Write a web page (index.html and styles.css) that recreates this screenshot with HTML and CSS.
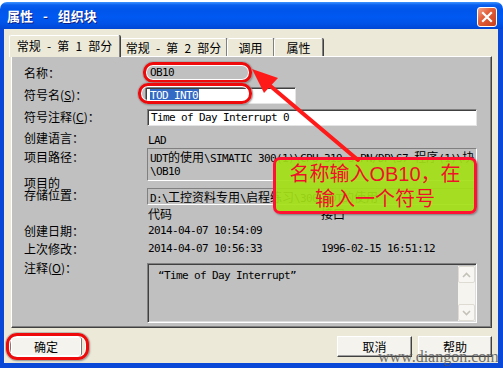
FILE: index.html
```html
<!DOCTYPE html>
<html lang="zh-CN">
<head>
<meta charset="utf-8">
<title>属性 - 组织块</title>
<link rel="stylesheet" href="styles.css">
</head>
<body>
<div class="window">
  <div class="titlebar">
    <span class="title">属性 - 组织块</span>
    <span class="close"><svg width="12" height="12" viewBox="0 0 12 12"><path d="M2 2L10 10M10 2L2 10" stroke="#fff" stroke-width="2.2" stroke-linecap="square"/></svg></span>
  </div>
  <div class="frame">
    <div class="tabs">
      <div class="tab active w1">常规 - 第 1 部分</div>
      <div class="tab w2">常规 - 第 2 部分</div>
      <div class="tab w3">调用</div>
      <div class="tab w4">属性</div>
    </div>
    <div class="panel">
      <div class="form">
        <div class="lbl">名称：</div>
        <div class="val"><div class="plain m">OB10</div></div>

        <div class="lbl">符号名(<u>S</u>)：</div>
        <div class="val"><div class="input short m"><span class="sel">TOD_INT0</span></div></div>

        <div class="lbl">符号注释(<u>C</u>)：</div>
        <div class="val"><div class="input m">Time of Day Interrupt 0</div></div>

        <div class="lbl">创建语言：</div>
        <div class="val"><span class="m txt">LAD</span></div>

        <div class="lbl top">项目路径：</div>
        <div class="val"><div class="box path m">UDT<span class="c">的使用</span>\SIMATIC 300(1)\CPU 319-3 PN/DP\S7 <span class="c">程序</span>(1)\<span class="c">块</span><br>\OB10</div></div>

        <div class="lbl two">项目的<br>存储位置：</div>
        <div class="val end"><div class="box store m">D:\<span class="c">工控资料专用</span>\<span class="c">启程练习</span>\300\UDT<span class="c">的使用</span></div></div>

        <div class="lbl"></div>
        <div class="val pair"><span class="col1">代码</span><span>接口</span></div>

        <div class="lbl">创建日期：</div>
        <div class="val pair m"><span class="col1">2014-04-07 10:54:09</span></div>

        <div class="lbl">上次修改：</div>
        <div class="val pair m"><span class="col1">2014-04-07 10:56:33</span><span>1996-02-15 16:51:12</span></div>

        <div class="lbl top2">注释(<u>O</u>)：</div>
        <div class="val start">
          <div class="comment">
            <div class="ctext m">“Time of Day Interrupt”</div>
            <div class="scroll">
              <div class="sbtn"><svg width="9" height="6" viewBox="0 0 9 6"><path d="M1 5L4.5 1.5L8 5" fill="none" stroke="#c4c2b8" stroke-width="1.6"/></svg></div>
              <div class="sbtn"><svg width="9" height="6" viewBox="0 0 9 6"><path d="M1 1L4.5 4.5L8 1" fill="none" stroke="#c4c2b8" stroke-width="1.6"/></svg></div>
            </div>
          </div>
        </div>
      </div>
    </div>
    <div class="buttons">
      <div class="btn ok">确定</div>
      <div class="spacer"></div>
      <div class="btn cancel">取消</div>
      <div class="btn help">帮助</div>
    </div>
  </div>
</div>

<div class="ring ring1"></div>
<div class="ring ring2"></div>
<div class="ring ring3"></div>

<div class="callout">名称输入<span class="lat">OB10</span>，在<br>输入一个符号</div>

<svg class="arrow" width="503" height="368" viewBox="0 0 503 368">
  <line x1="358" y1="160" x2="268" y2="84" stroke="#ff1a1a" stroke-width="4" stroke-linecap="round"/>
  <polygon points="252,69 264,93 278,78" fill="#ff1a1a"/>
</svg>

<div class="watermark">www.diangon.com</div>
</body>
</html>
```

FILE: styles.css
```css
* { box-sizing: border-box; }
html, body { margin: 0; padding: 0; }
body {
  width: 503px;
  height: 368px;
  overflow: hidden;
  position: relative;
  background: #fff;
  font-family: "Noto Sans CJK SC", sans-serif;
  font-size: 12px;
  color: #000;
}
.window {
  margin-top: 2px;
  height: 366px;
  display: flex;
  flex-direction: column;
}
.titlebar {
  height: 27px;
  flex: none;
  display: flex;
  align-items: center;
  justify-content: space-between;
  padding: 0 6px 0 7px;
  border-radius: 7px 7px 0 0;
  background: linear-gradient(#3d95ff 0, #0a5eef 3px, #0055ea 8px, #0059f2 15px, #0052e6 22px, #0046d4 27px);
}
.title {
  color: #fff;
  font-weight: bold;
  font-size: 13px;
  line-height: 16px;
  word-spacing: 7px;
  text-shadow: 1px 1px 0 #0f1e84;
}
.close {
  width: 20px;
  height: 20px;
  margin-top: 2px;
  border: 1px solid #fff;
  border-radius: 3px;
  background: linear-gradient(135deg, #f3a58a 0%, #e2603a 40%, #c8401b 100%);
  display: flex;
  align-items: center;
  justify-content: center;
}
.frame {
  flex: 1;
  background: #ece9d8;
  border-style: solid;
  border-color: #0a48d8;
  border-width: 0 5px 5px 4px;
  display: flex;
  flex-direction: column;
}
.tabs {
  margin-top: 6px;
  height: 21px;
  padding-left: 5px;
  display: flex;
  align-items: flex-end;
  position: relative;
  z-index: 1;
}
.tab {
  height: 18px;
  line-height: 17px;
  text-align: center;
  word-spacing: 3.5px;
  background: #ece9d8;
  border-top: 1px solid #fff;
  border-left: 1px solid #fff;
  border-right: 1px solid #808080;
  box-shadow: 1px 0 0 #404040;
  border-radius: 2px 2px 0 0;
}
.tab.active {
  height: 22px;
  line-height: 19px;
  margin-bottom: -1px;
  position: relative;
  z-index: 2;
}
.w1 { width: 111px; }
.w2 { width: 107px; }
.w3 { width: 47px; }
.w4 { width: 49px; }
.panel {
  margin: 0 6px 0 7px;
  height: 272px;
  flex: none;
  background: #c0c0c0;
  border-top: 1px solid #fff;
  border-left: 1px solid #fff;
  border-right: 1px solid #404040;
  border-bottom: 1px solid #404040;
  box-shadow: inset -1px -1px 0 #808080;
  padding: 5px 14px 0 12px;
}
.form {
  display: grid;
  grid-template-columns: 123px 1fr;
  grid-template-rows: 22px 22px 22px 20px 33px 25px 15px 19px 17px 68px;
}
.lbl {
  align-self: center;
  line-height: 12px;
  white-space: nowrap;
}
.lbl u { text-decoration: underline; }
.lbl.top { align-self: start; margin-top: 3px; }
.lbl.top2 { align-self: start; margin-top: 5px; }
.lbl.two { align-self: end; margin-bottom: 5px; }
.val {
  align-self: center;
  min-width: 0;
}
.val.end { align-self: end; margin-bottom: 1px; }
.val.start { align-self: start; margin-top: 6px; }
.m {
  font-family: "DejaVu Sans Mono", "Noto Sans CJK SC", monospace;
  font-size: 11px;
  letter-spacing: -0.62px;
}
.m .c {
  font-family: "Noto Sans CJK SC", sans-serif;
  font-size: 12px;
  letter-spacing: 0;
}
.plain {
  width: 98px;
  height: 14px;
  line-height: 14px;
  padding-left: 3px;
}
.input {
  height: 17px;
  line-height: 15px;
  background: #fff;
  border-top: 1px solid #808080;
  border-left: 1px solid #808080;
  border-right: 1px solid #e4e4e4;
  border-bottom: 1px solid #e4e4e4;
  box-shadow: inset 1px 1px 0 #404040;
  padding-left: 3px;
  white-space: nowrap;
  overflow: hidden;
}
.input.short {
  width: 151px;
  margin-left: -2px;
  padding-left: 4px;
}
.sel {
  background: #316ac5;
  color: #fff;
  display: inline-block;
  line-height: 13px;
  padding-right: 1px;
}
.txt { padding-left: 1px; }
.box {
  border-top: 1px solid #808080;
  border-left: 1px solid #808080;
  border-right: 1px solid #fff;
  border-bottom: 1px solid #fff;
  padding: 1px 0 0 2px;
  white-space: nowrap;
  overflow: hidden;
}
.path {
  height: 33px;
  line-height: 13px;
}
.store {
  height: 17px;
  line-height: 14px;
}
.pair {
  display: flex;
  white-space: nowrap;
  line-height: 13px;
}
.col1 {
  width: 174px;
  flex: none;
  padding-left: 1px;
}
.comment {
  height: 60px;
  display: flex;
  border-top: 1px solid #808080;
  border-left: 1px solid #808080;
  border-right: 1px solid #fff;
  border-bottom: 1px solid #fff;
  box-shadow: inset 1px 1px 0 #404040, inset -1px -1px 0 #dcdcdc;
  padding: 2px 1px 1px 2px;
}
.ctext {
  flex: 1;
  padding: 3px 0 0 8px;
  line-height: 13px;
}
.scroll {
  width: 17px;
  background: #f5f4ef;
  display: flex;
  flex-direction: column;
  justify-content: space-between;
}
.sbtn {
  height: 17px;
  background: #f7f6f2;
  border: 1px solid #dedcd2;
  border-radius: 2px;
  display: flex;
  align-items: center;
  justify-content: center;
}
.buttons {
  margin-top: 8px;
  height: 21px;
  padding: 0 6px;
  display: flex;
}
.spacer { flex: 1; }
.btn {
  height: 21px;
  line-height: 19px;
  text-align: center;
  background: #f4f3ee;
  border-top: 1px solid #fff;
  border-left: 1px solid #fff;
  border-right: 1px solid #404040;
  border-bottom: 1px solid #404040;
  box-shadow: inset -1px -1px 0 #a0a0a0;
}
.ok { width: 72px; border-radius: 3px; border-color: #7a7a7a; box-shadow: inset 0 0 0 1px #fff; }
.cancel { width: 75px; margin-right: 6px; }
.help { width: 74px; }

.ring {
  position: absolute;
  border: 3px solid #ee0a0a;
  border-radius: 10px;
  box-shadow: 0 0 0 1px rgba(160, 160, 160, 0.6), inset 0 0 0 1px #fff, 1px 1px 2px rgba(0, 0, 0, 0.35);
}
.ring1 { left: 143px; top: 62px; width: 109px; height: 21px; }
.ring2 { left: 138px; top: 83px; width: 114px; height: 21px; }
.ring3 { left: 6px; top: 333px; width: 83px; height: 27px; border-radius: 11px; }

.callout {
  position: absolute;
  left: 273px;
  top: 157px;
  width: 204px;
  height: 57px;
  border: 3px solid #ff1232;
  border-radius: 7px;
  background: rgba(163, 224, 22, 0.92);
  box-shadow: 1px 1px 2px rgba(0, 0, 0, 0.35);
  color: #f0102a;
  font-size: 20px;
  line-height: 23px;
  padding-top: 1px;
  text-align: center;
  white-space: nowrap;
}
.callout .lat {
  font-family: "Liberation Sans", sans-serif;
}
.arrow {
  position: absolute;
  left: 0;
  top: 0;
  pointer-events: none;
}
.watermark {
  position: absolute;
  left: 378px;
  top: 348px;
  font-family: "Liberation Serif", serif;
  font-size: 16px;
  line-height: 18px;
  color: rgba(85, 85, 85, 0.85);
  white-space: nowrap;
}
```
